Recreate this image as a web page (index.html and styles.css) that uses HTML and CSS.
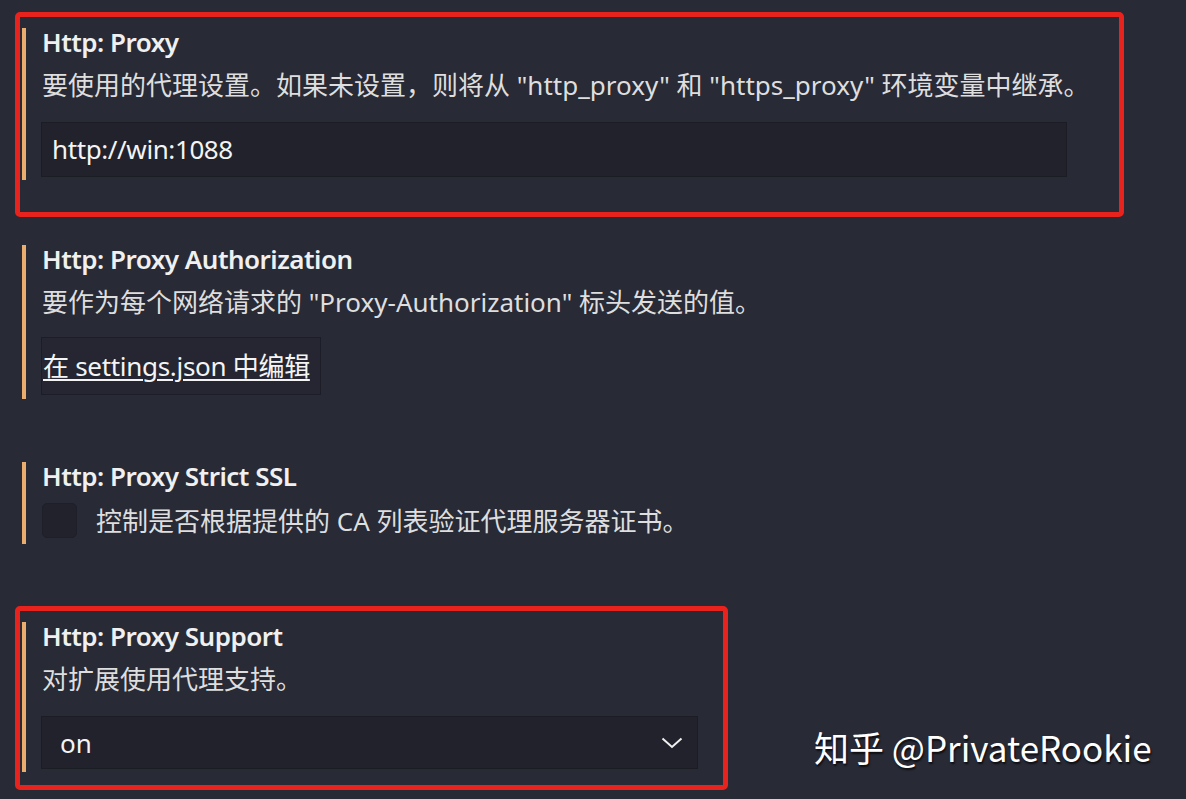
FILE: index.html
```html
<!DOCTYPE html>
<html lang="zh-CN">
<head>
<meta charset="utf-8">
<title>Settings</title>
<link rel="stylesheet" href="styles.css">
</head>
<body>
<div class="page">
  <section class="setting highlight s1">
    <div class="item">
      <div class="title">Http: Proxy</div>
      <div class="desc">要使用的代理设置。如果未设置，则将从 "http_proxy" 和 "https_proxy" 环境变量中继承。</div>
      <div class="input input-wide">http://win:1088</div>
    </div>
  </section>

  <section class="setting s2">
    <div class="item">
      <div class="title">Http: Proxy Authorization</div>
      <div class="desc">要作为每个网络请求的 "Proxy-Authorization" 标头发送的值。</div>
      <div class="edit-btn"><span class="link">在 settings.json 中编辑</span></div>
    </div>
  </section>

  <section class="setting s3">
    <div class="item">
      <div class="title">Http: Proxy Strict SSL</div>
      <div class="check-row">
        <span class="checkbox"></span>
        <span class="desc-inline">控制是否根据提供的 CA 列表验证代理服务器证书。</span>
      </div>
    </div>
  </section>

  <section class="setting highlight s4">
    <div class="item">
      <div class="title">Http: Proxy Support</div>
      <div class="desc">对扩展使用代理支持。</div>
      <div class="select">
        <span class="select-value">on</span>
        <svg class="chevron" width="22" height="12" viewBox="0 0 22 12"><path d="M1.5 1.5 L11 10 L20.5 1.5" fill="none" stroke="#f0f0f0" stroke-width="2"/></svg>
      </div>
    </div>
  </section>
</div>
<div class="watermark">知乎 @PrivateRookie</div>
</body>
</html>
```

FILE: styles.css
```css
html, body {
  margin: 0;
  padding: 0;
}
body {
  background: #282a36;
  width: 1186px;
  height: 799px;
  overflow: hidden;
  position: relative;
  font-family: "Noto Sans", "Noto Sans CJK SC", sans-serif;
  color: #e4e4e4;
}
.page {
  padding: 12px 0 0 15px;
}
.setting {
  border: 5px solid transparent;
  border-radius: 5px;
  padding: 11px 0 32px 0;
}
.setting.highlight {
  border-color: #e8231e;
}
.s1 { width: 1099px; }
.s2 { margin-top: 12px; padding-bottom: 32px; }
.s2 .item { padding-bottom: 4px; }
.s3 { margin-top: 10px; padding-bottom: 52px; }
.s3 .item { padding-bottom: 6px; }
.s4 { width: 703px; margin-top: 5px; padding-top: 11px; padding-bottom: 13px; }

.item {
  margin-left: 2px;
  border-left: 4px solid #eaad6e;
  padding-left: 16px;
  padding-bottom: 3px;
}
.title {
  font-weight: 600;
  font-size: 26px;
  line-height: 28px;
  color: #f0f0f0;
  letter-spacing: -0.5px;
}
.desc, .desc-inline {
  font-size: 26px;
  line-height: 32px;
  color: #dedede;
}
.desc {
  margin-top: 13px;
}
.input {
  box-sizing: border-box;
  margin-top: 21px;
  height: 55px;
  background: #21222c;
  border: 1px solid #1b1c24;
  padding-left: 10px;
  font-size: 26px;
  line-height: 53px;
  color: #f4f4f4;
  margin-left: -1px;
  letter-spacing: -0.4px;
}
.input-wide { width: 1026px; }
.edit-btn {
  box-sizing: border-box;
  display: inline-block;
  vertical-align: top;
  margin-top: 19px;
  margin-left: -1px;
  height: 58px;
  width: 280px;
  background: #252631;
  border: 1px solid #1c1d26;
  padding-left: 1px;
  font-size: 26px;
  line-height: 56px;
  white-space: nowrap;
}
.link {
  color: #f4f4f4;
  text-decoration: underline;
  text-decoration-thickness: 1.5px;
  text-underline-offset: 3px;
  letter-spacing: -0.3px;
}
.check-row {
  display: flex;
  align-items: center;
  margin-top: 13px;
  gap: 19px;
}
.checkbox {
  box-sizing: border-box;
  width: 35px;
  height: 35px;
  background: #21222c;
  border: 1px solid #1e1f28;
  border-radius: 5px;
  flex: none;
}
.select {
  box-sizing: border-box;
  margin-top: 21px;
  margin-left: -1px;
  width: 657px;
  height: 53px;
  background: #21222c;
  border: 1px solid #1b1c24;
  display: flex;
  align-items: center;
  justify-content: space-between;
  padding: 0 14px 0 18px;
}
.select-value {
  font-size: 26px;
  color: #f4f4f4;
}
.chevron {
  display: block;
}
.watermark {
  position: absolute;
  left: 814px;
  top: 724px;
  font-family: "Noto Sans CJK SC", "Noto Sans", sans-serif;
  font-size: 35px;
  line-height: 46px;
  color: #ffffff;
  text-shadow: 1px 2px 2px rgba(0, 0, 0, 0.7);
  white-space: nowrap;
}
```
